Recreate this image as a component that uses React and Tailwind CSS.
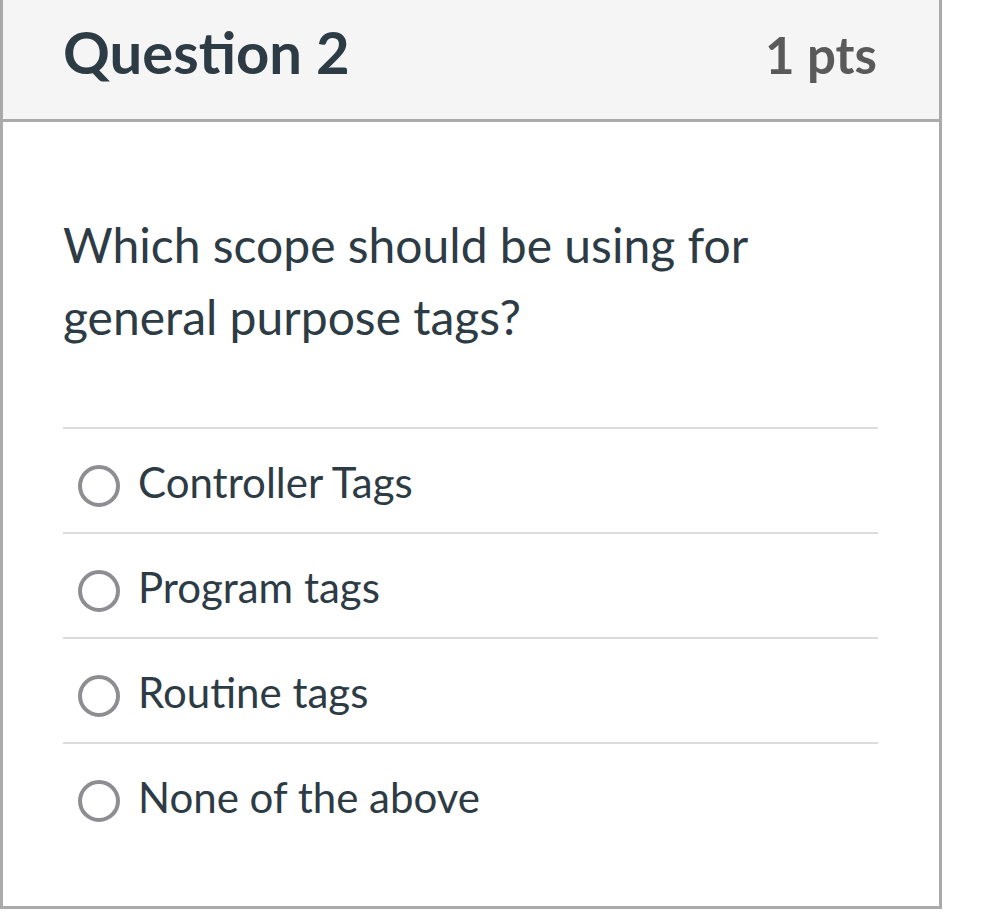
import React from 'react';

const answers = ['Controller Tags', 'Program tags', 'Routine tags', 'None of the above'];

const AnswerRow = ({ label }) => (
  <label className="flex items-start border-t-2 border-[#dcdcdc] pt-[23px] pb-[20px] cursor-pointer">
    <span className="mt-[13px] ml-[15px] w-[42px] h-[42px] rounded-full border-[4px] border-[#8e8e92] bg-white shrink-0" />
    <span className="ml-[18px] text-[42px] leading-[60px] text-[#2d3b45]">{label}</span>
  </label>
);

const App = () => {
  return (
    <div className="min-h-screen bg-white" style={{ fontFamily: 'Lato, "Noto Sans", sans-serif' }}>
      <div className="w-[942px] border-l-[3px] border-r-[3px] border-b-[3px] border-[#aaaaaa] bg-white">
        <div className="h-[122px] bg-[#f5f5f5] border-b-[3px] border-[#aaaaaa] flex items-baseline justify-between pl-[60px] pr-[62px] pt-[23px]">
          <h2 className="text-[58px] leading-none font-bold text-[#2d3b45]">Question 2</h2>
          <span className="text-[51px] leading-none font-bold text-[#5a5a5a]">1 pts</span>
        </div>
        <div className="pl-[60px] pr-[61px]">
          <p className="pt-[87px] text-[48px] leading-[72px] text-[#2d3b45] pr-[120px]">
            Which scope should be using for general purpose tags?
          </p>
          <div className="mt-[74px] pb-[59px]">
            {answers.map(a => (
              <AnswerRow key={a} label={a} />
            ))}
          </div>
        </div>
      </div>
    </div>
  );
};

export default App;
